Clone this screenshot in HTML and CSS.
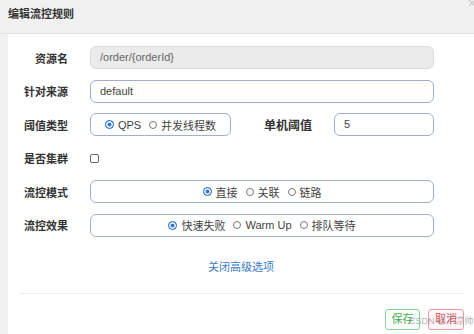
FILE: index.html
```html
<!DOCTYPE html>
<html lang="zh">
<head>
<meta charset="utf-8">
<title>编辑流控规则</title>
<link rel="stylesheet" href="styles.css">
</head>
<body>
<div class="modal">
  <div class="modal-header">
    <span class="title">编辑流控规则</span>
    <svg class="close" width="10" height="10" viewBox="0 0 10 10" aria-hidden="true">
      <path d="M2 2 L8 8 M8 2 L2 8" stroke="#cfcfcf" stroke-width="1.5" fill="none"/>
    </svg>
  </div>
  <div class="modal-body">
    <div class="form">
      <div class="row">
        <label class="label">资源名</label>
        <div class="input disabled">/order/{orderId}</div>
      </div>
      <div class="row">
        <label class="label">针对来源</label>
        <div class="input active">default</div>
      </div>
      <div class="row">
        <label class="label">阈值类型</label>
        <div class="radio-box small">
          <span class="opt"><span class="radio on"></span>QPS</span>
          <span class="opt"><span class="radio"></span>并发线程数</span>
        </div>
        <label class="label2">单机阈值</label>
        <div class="input short">5</div>
      </div>
      <div class="row">
        <label class="label">是否集群</label>
        <span class="checkbox"></span>
      </div>
      <div class="row">
        <label class="label">流控模式</label>
        <div class="radio-box wide">
          <span class="opt"><span class="radio on"></span>直接</span>
          <span class="opt"><span class="radio"></span>关联</span>
          <span class="opt"><span class="radio"></span>链路</span>
        </div>
      </div>
      <div class="row">
        <label class="label">流控效果</label>
        <div class="radio-box wide">
          <span class="opt"><span class="radio on"></span>快速失败</span>
          <span class="opt"><span class="radio"></span>Warm Up</span>
          <span class="opt"><span class="radio"></span>排队等待</span>
        </div>
      </div>
    </div>
    <div class="link-row"><a class="link">关闭高级选项</a></div>
    <div class="footer">
      <button class="btn save">保存</button>
      <button class="btn cancel">取消</button>
    </div>
  </div>
  <span class="watermark">CSDN @不凉帅</span>
</div>
</body>
</html>
```
FILE: styles.css
```css
* { box-sizing: border-box; }
html, body {
  margin: 0;
  padding: 0;
  width: 474px;
  height: 334px;
  overflow: hidden;
  background: #f1f1f1;
  font-family: "Liberation Sans", "Noto Sans CJK SC", sans-serif;
  color: #333;
}
.modal {
  position: relative;
  width: 474px;
  height: 334px;
  display: flex;
  flex-direction: column;
}
.modal-header {
  height: 34px;
  border-bottom: 1px solid #e2e2e2;
  padding: 4px 0 0 8px;
  background: #f1f1f1;
}
.title {
  font-size: 11px;
  font-weight: bold;
  line-height: 16px;
  color: #333;
}
.close {
  position: absolute;
  right: -3px;
  top: -2px;
}
.modal-body {
  flex: 1;
  margin-left: 8px;
  background: #fff;
  padding-top: 12px;
}
.form {
  display: flex;
  flex-direction: column;
  gap: 10.6px;
}
.row {
  display: flex;
  align-items: center;
  height: 23px;
}
.label {
  width: 60px;
  margin-right: 22px;
  text-align: right;
  font-size: 11px;
  font-weight: bold;
  color: #333;
}
.label2 {
  width: 48px;
  margin-left: 33px;
  margin-right: 22px;
  text-align: right;
  font-size: 12px;
  font-weight: bold;
  color: #333;
}
.input {
  width: 344px;
  height: 23px;
  border: 1px solid #9db0cf;
  border-radius: 6px;
  padding-left: 9px;
  font-size: 11px;
  line-height: 21px;
  color: #444;
  background: #fff;
}
.input.disabled {
  background: #ebebeb;
  border-color: #dcdcdc;
  color: #666;
}
.input.active {
  background: #fffefa;
}
.input.short {
  width: 100px;
}
.radio-box {
  height: 23px;
  border: 1px solid #9db0cf;
  border-radius: 6px;
  display: flex;
  align-items: center;
  justify-content: center;
  gap: 8px;
  font-size: 11px;
  color: #444;
}
.radio-box.small { width: 141px; }
.radio-box.wide { width: 344px; }
.opt {
  display: flex;
  align-items: center;
  gap: 4px;
  white-space: nowrap;
}
.radio {
  width: 8px;
  height: 8px;
  border-radius: 50%;
  border: 1px solid #777;
  background: #fff;
  display: inline-block;
}
.radio.on {
  width: 9px;
  height: 9px;
  border: 1px solid #2f76d6;
  background: #2f76d6;
  box-shadow: inset 0 0 0 1.5px #fff;
}
.checkbox {
  width: 9px;
  height: 9px;
  border: 1px solid #666;
  border-radius: 2px;
  background: #fff;
  display: inline-block;
  margin-top: 1px;
}
.link-row {
  text-align: center;
  margin-top: 21px;
  height: 16px;
  line-height: 16px;
}
.link {
  font-size: 11px;
  color: #3a7cc6;
  text-decoration: none;
}
.footer {
  margin: 19px 10px 0 12px;
  border-top: 1px solid #ececec;
  padding-top: 15px;
  display: flex;
  justify-content: flex-end;
  gap: 8px;
}
.btn {
  height: 21px;
  padding: 0;
  font-family: inherit;
  font-size: 11px;
  border-radius: 3px;
  background: #fff;
  line-height: 19px;
}
.btn.save {
  width: 35px;
  border: 1px solid #8fd19a;
  color: #4aa85a;
  background: #fbfffb;
}
.btn.cancel {
  width: 36px;
  border: 1px solid #ea9aa3;
  color: #e0505e;
  background: #fff6f7;
}
.watermark {
  position: absolute;
  left: 409px;
  top: 316px;
  font-size: 9px;
  line-height: 11px;
  color: rgba(120, 120, 120, 0.6);
  white-space: nowrap;
}
```
